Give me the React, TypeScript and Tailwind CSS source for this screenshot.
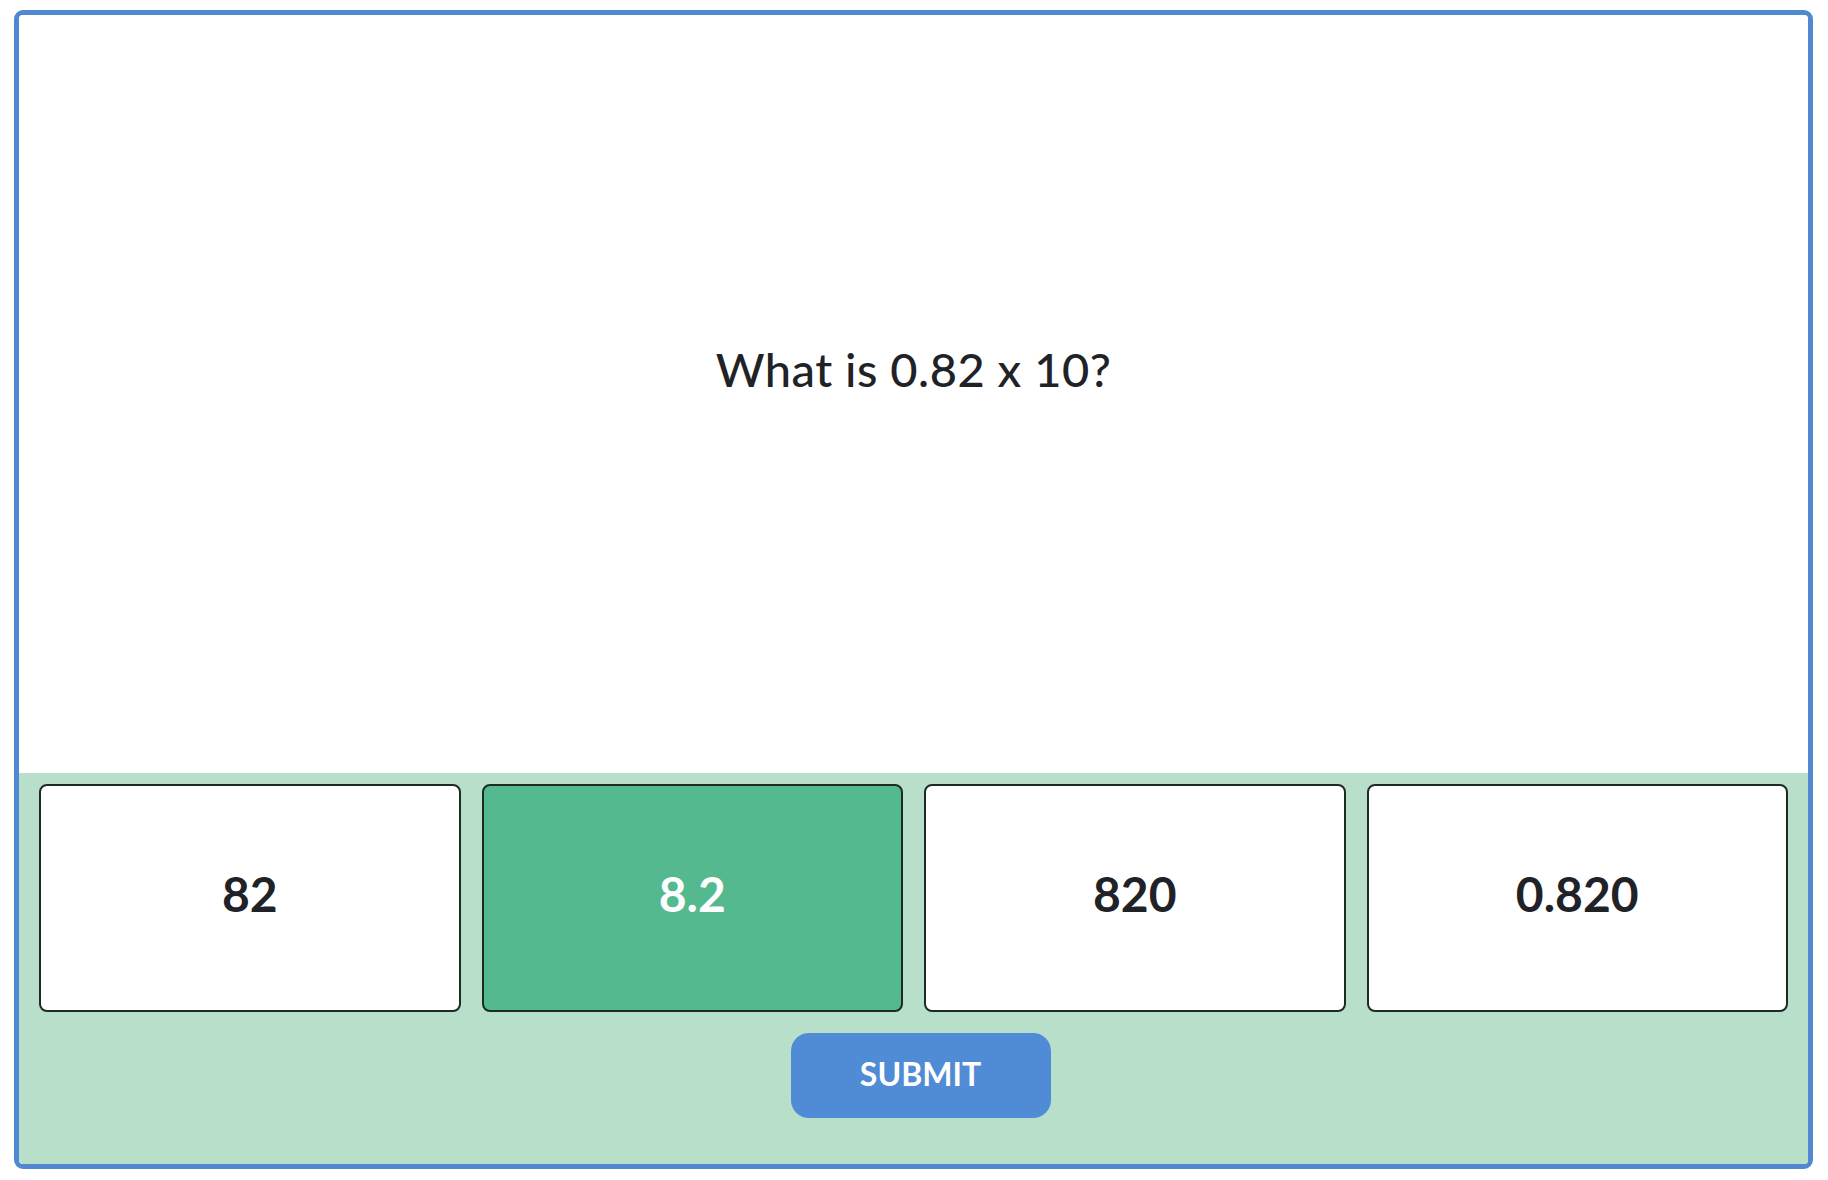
import { useState } from 'react';

const answers = ['82', '8.2', '820', '0.820'];

export default function App() {
  const [selected, setSelected] = useState(1);

  return (
    <div className="min-h-screen bg-white pl-[14px] pr-[15px] pt-[10px] pb-[11px] font-['Lato','Noto_Sans',sans-serif] text-[#1f2328]">
      <div className="flex h-[1159px] flex-col overflow-hidden rounded-[9px] border-[5px] border-[#5089d2]">
        {/* Question */}
        <div className="flex flex-1 items-center justify-center bg-white pb-[50px]">
          <h1 className="text-[47px] font-medium tracking-[0.5px]">What is 0.82 x 10?</h1>
        </div>

        {/* Answers */}
        <div className="flex h-[391px] flex-col items-center bg-[#b7dfc9] px-[20px] pt-[11px]">
          <div className="grid w-full grid-cols-4 gap-[21px]">
            {answers.map((a, i) => (
              <button
                key={a}
                onClick={() => setSelected(i)}
                className={`flex h-[228px] items-center justify-center rounded-[8px] border-2 border-[#1c2b26] pb-[9px] text-[48px] font-bold ${
                  selected === i ? 'bg-[#55b98f] text-white' : 'bg-white text-[#1f2328]'
                }`}
              >
                {a}
              </button>
            ))}
          </div>
          <button className="mt-[21px] ml-[14px] flex h-[85px] w-[260px] items-center justify-center rounded-[18px] bg-[#508bd5] pb-[4px] text-[32px] font-bold text-white">
            SUBMIT
          </button>
        </div>
      </div>
    </div>
  );
}
